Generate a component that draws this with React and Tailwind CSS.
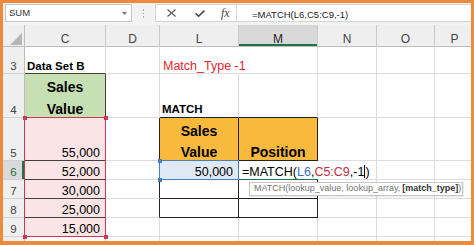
import React from "react";

function Cell({ r = "border-r-[#dcdcdc]", b = "border-b-[#dcdcdc]", className = "", children }) {
  return <div className={`flex min-w-0 border-r border-b ${r} ${b} ${className}`}>{children}</div>;
}

function ColHead({ children, active }) {
  return (
    <div
      className={`flex items-end justify-center border-r border-b border-r-[#cacaca] border-b-[#bdbdbd] text-[12px] leading-[14px] ${
        active ? "bg-[#d9d9d9] text-[#262626] shadow-[inset_0_-2px_0_#217346]" : "bg-[#efefef] text-[#444]"
      }`}
    >
      {children}
    </div>
  );
}

function RowHead({ children, active }) {
  return (
    <div
      className={`flex items-end justify-center border-r border-b border-r-[#bdbdbd] border-b-[#d2d2d2] text-[11.5px] leading-[14px] ${
        active ? "bg-[#d9d9d9] text-[#217346] shadow-[inset_-2px_0_0_#217346]" : "bg-[#efefef] text-[#444]"
      }`}
    >
      {children}
    </div>
  );
}

function Num({ children, b = "border-b-[#404040]" }) {
  return (
    <Cell r="border-r-[#404040]" b={b} className="bg-[#fbe4e5] items-end justify-end pr-[5px] text-[12.5px] leading-[14px]">
      {children}
    </Cell>
  );
}

function FormulaBar() {
  return (
    <div className="flex h-[22px] items-start bg-[#f2f2f2] pt-px">
      <div className="ml-[2px] flex h-[18px] w-[127px] items-center border border-[#c6c6c6] bg-white pl-[3px] text-[9.5px] text-[#333]">
        <span>SUM</span>
        <svg className="ml-auto mr-[4px]" width="5" height="3" viewBox="0 0 5 3">
          <path d="M0 0h5L2.5 3z" fill="#777" />
        </svg>
      </div>
      <div className="flex w-[23px] flex-col items-center gap-[2px] pt-[5px]">
        <span className="h-[1.5px] w-[1.5px] bg-[#a8a8a8]" />
        <span className="h-[1.5px] w-[1.5px] bg-[#a8a8a8]" />
        <span className="h-[1.5px] w-[1.5px] bg-[#a8a8a8]" />
      </div>
      <div className="flex h-[18px] flex-1 items-center border border-r-0 border-[#d4d4d4] bg-white">
        <div className="flex h-full w-[80px] items-center pl-[11px]">
          <svg width="9" height="8" viewBox="0 0 9 8">
            <path d="M0.5 0.5L8.5 7.5M8.5 0.5L0.5 7.5" stroke="#555" strokeWidth="1.1" fill="none" />
          </svg>
          <svg className="ml-[19px]" width="10" height="7" viewBox="0 0 10 7">
            <path d="M0.6 3.4L3.6 6.2L9.4 0.6" stroke="#444" strokeWidth="1.5" fill="none" />
          </svg>
          <span className="ml-[16px] font-['Liberation_Serif',serif] text-[12px] italic leading-none text-[#444]">fx</span>
        </div>
        <div className="h-full border-l border-[#d8d8d8] pl-[15px] pt-[3px] text-[9.5px] text-[#222]">=MATCH(L6,C5:C9,-1)</div>
      </div>
    </div>
  );
}

function Sheet() {
  const black = "border-r-[#222]";
  const blackB = "border-b-[#222]";
  return (
    <div className="grid grid-cols-[22px_81px_54px_79px_79px_59px_58px_40px] grid-rows-[22px_27px_44px_43px_19px_19px_19px_19px_19px_19px]">
      <div className="flex items-end justify-end border-r border-b border-r-[#bdbdbd] border-b-[#bdbdbd] bg-[#efefef] pb-px pr-[2px]">
        <div className="h-0 w-0 border-b-[12px] border-l-[12px] border-b-[#b5b5b5] border-l-transparent" />
      </div>
      <ColHead>C</ColHead>
      <ColHead>D</ColHead>
      <ColHead>L</ColHead>
      <ColHead active>M</ColHead>
      <ColHead>N</ColHead>
      <ColHead>O</ColHead>
      <ColHead>P</ColHead>

      <RowHead>3</RowHead>
      <Cell b="border-b-[#404040]" className="items-end pl-[2px] text-[11.5px] font-bold leading-[14px]">Data Set B</Cell>
      <Cell />
      <Cell r="border-r-transparent" className="items-end whitespace-nowrap pl-[3px] text-[12.5px] leading-[14px] text-[#e3262f]">
        Match_Type -1
      </Cell>
      <Cell />
      <Cell />
      <Cell />
      <Cell />

      <RowHead>4</RowHead>
      <Cell r="border-r-[#404040]" b="border-b-[#404040]" className="flex-col items-center justify-end bg-[#c6e0b4]">
        <div className="mb-[-3px] text-center text-[14px] font-bold leading-[22px]">
          <div>Sales</div>
          <div>Value</div>
        </div>
      </Cell>
      <Cell />
      <Cell b={blackB} className="items-end pb-px pl-[2px] text-[11.5px] font-bold leading-[14px]">MATCH</Cell>
      <Cell b={blackB} />
      <Cell />
      <Cell />
      <Cell />

      <RowHead>5</RowHead>
      <Num>55,000</Num>
      <Cell r={black} />
      <Cell r={black} b={blackB} className="flex-col items-center justify-end bg-[#f8b93c]">
        <div className="mb-[-3px] text-center text-[14px] font-bold leading-[21px]">
          <div>Sales</div>
          <div>Value</div>
        </div>
      </Cell>
      <Cell r={black} b={blackB} className="items-end justify-center bg-[#f8b93c]">
        <div className="mb-[-3px] text-[14px] font-bold leading-[21px]">Position</div>
      </Cell>
      <Cell />
      <Cell />
      <Cell />

      <RowHead active>6</RowHead>
      <Num>52,000</Num>
      <Cell r={black} />
      <Cell r={black} b={blackB} className="items-end justify-end bg-[#dfe8f5] pr-[5px] text-[12.5px] leading-[14px]">
        50,000
      </Cell>
      <Cell r={black} b={blackB} className="items-stretch">
        <div className="relative z-10 flex items-end whitespace-nowrap bg-white pl-[3px] pr-[3px] text-[12.5px] leading-[14px]">
          <span>=MATCH(</span>
          <span className="text-[#3b6fc6]">L6</span>
          <span>,</span>
          <span className="text-[#c0303f]">C5:C9</span>
          <span>,-1</span>
          <span className="mb-px inline-block h-[13px] w-px bg-black" />
          <span>)</span>
        </div>
      </Cell>
      <Cell />
      <Cell />
      <Cell />

      <RowHead>7</RowHead>
      <Num>30,000</Num>
      <Cell r={black} />
      <Cell r={black} b={blackB} />
      <Cell r={black} b={blackB} />
      <Cell />
      <Cell />
      <Cell />

      <RowHead>8</RowHead>
      <Num>25,000</Num>
      <Cell r={black} />
      <Cell r={black} b={blackB} />
      <Cell r={black} b={blackB} />
      <Cell />
      <Cell />
      <Cell />

      <RowHead>9</RowHead>
      <Num>15,000</Num>
      <Cell />
      <Cell />
      <Cell />
      <Cell />
      <Cell />
      <Cell />

      <RowHead>10</RowHead>
      <Cell />
      <Cell />
      <Cell />
      <Cell />
      <Cell />
      <Cell />
      <Cell />
    </div>
  );
}

function Handle({ className }) {
  return <div className={`absolute h-[4px] w-[4px] ${className}`} />;
}

export default function App() {
  return (
    <div className="h-[245px] w-[474px] overflow-hidden border-x-[3px] border-b-[4px] border-t-[3px] border-[#ee8a3c] bg-white font-['Liberation_Sans',Arial,sans-serif] text-black">
      <div className="relative h-[238px] w-[468px] overflow-hidden">
        <FormulaBar />
        <Sheet />

        {/* range highlight C5:C9 */}
        <div className="pointer-events-none absolute left-[21px] top-[114px] h-[120px] w-[82px] border border-[#c43b53]" />
        <Handle className="left-[20px] top-[113px] bg-[#c43b53]" />
        <Handle className="left-[101px] top-[113px] bg-[#c43b53]" />
        <Handle className="left-[20px] top-[232px] bg-[#c43b53]" />
        <Handle className="left-[101px] top-[232px] bg-[#c43b53]" />

        {/* range highlight L6 */}
        <div className="pointer-events-none absolute left-[156px] top-[157px] h-[20px] w-[80px] border border-[#4a7ebb]" />
        <Handle className="left-[155px] top-[156px] bg-[#4a7ebb]" />
        <Handle className="left-[155px] top-[175px] bg-[#4a7ebb]" />

        {/* active cell M6 */}
        <div className="pointer-events-none absolute left-[236px] top-[175px] h-[2px] w-[79px] bg-[#217346]" />

        {/* function tooltip */}
        <div className="absolute left-[246px] top-[179px] flex h-[14px] w-[214px] items-center whitespace-nowrap border border-[#c6c6c6] bg-white pl-[4px] text-[9px] text-[#737373] shadow-[1px_1px_1px_rgba(0,0,0,0.08)]">
          MATCH(lookup_value, lookup_array, <b className="ml-[2px] text-[#333]">[match_type]</b>)
        </div>
      </div>
    </div>
  );
}
